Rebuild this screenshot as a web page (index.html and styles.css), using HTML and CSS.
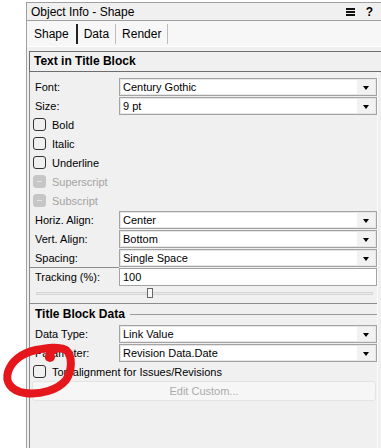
FILE: index.html
```html
<!DOCTYPE html>
<html lang="en">
<head>
  <meta charset="UTF-8">
  <title>Object Info - Shape</title>
  <link rel="stylesheet" href="styles.css">
</head>
<body>
  <div class="app">
    <div class="gutter"></div>
    <div class="panel">
      <div class="titlebar">
        <span class="title">Object Info - Shape</span>
        <span class="menu-icon"><i></i><i></i><i></i></span>
        <span class="help">?</span>
      </div>
      <div class="tabs">
        <span class="tab active">Shape</span>
        <span class="tab">Data</span>
        <span class="tab">Render</span>
      </div>
      <div class="section">
        <div class="section-head">Text in Title Block</div>
        <div class="section-body">
          <div class="row"><label>Font:</label><div class="select">Century Gothic<span class="arrow"></span></div></div>
          <div class="row"><label>Size:</label><div class="select">9 pt<span class="arrow"></span></div></div>
          <div class="check-row"><span class="box"></span>Bold</div>
          <div class="check-row"><span class="box"></span>Italic</div>
          <div class="check-row"><span class="box"></span>Underline</div>
          <div class="check-row disabled"><span class="box"></span>Superscript</div>
          <div class="check-row disabled"><span class="box"></span>Subscript</div>
          <div class="row"><label>Horiz. Align:</label><div class="select">Center<span class="arrow"></span></div></div>
          <div class="row"><label>Vert. Align:</label><div class="select">Bottom<span class="arrow"></span></div></div>
          <div class="row"><label>Spacing:</label><div class="select">Single Space<span class="arrow"></span></div></div>
          <div class="row tracking"><label>Tracking (%):</label><div class="select input">100</div></div>
          <div class="slider"><div class="track"></div><span class="thumb" style="left: 117px"></span></div>
          <div class="group-title">Title Block Data</div>
          <div class="row"><label>Data Type:</label><div class="select">Link Value<span class="arrow"></span></div></div>
          <div class="row"><label>Parameter:</label><div class="select">Revision Data.Date<span class="arrow"></span></div></div>
          <div class="check-row"><span class="box"></span>Top alignment for Issues/Revisions</div>
          <div class="button disabled">Edit Custom...</div>
        </div>
      </div>
    </div>
  </div>
  <svg class="markup" width="381" height="448" viewBox="0 0 381 448">
    <path d="M49 357 C50 350 58 346 66 350 C73 356 72 371 66 380 C58 390 40 395 25 393 C11 391 5 382 8 372 C11 362 21 353 36 350 C47 348 58 346 66 350" />
    <circle cx="50" cy="357" r="5" />
  </svg>
</body>
</html>
```

FILE: styles.css
```css
body { margin: 0; background: #fff; font-family: 'Liberation Sans', Arial, sans-serif; font-size: 11px; color: #000; position: relative; }
.app { display: flex; height: 448px; }
.gutter { width: 26px; flex: none; }
.panel { flex: 1; margin-top: 2px; border-left: 1px solid #a0a0a0; background: #f0f0f0; display: flex; flex-direction: column; }

.titlebar { height: 17px; border-top: 1px solid #a0a0a0; border-bottom: 1px solid #a0a0a0; display: flex; align-items: center; padding-left: 4px; font-size: 12px; }
.titlebar .title { flex: 1; }
.menu-icon { display: flex; flex-direction: column; gap: 1px; width: 9px; margin-right: 11px; }
.menu-icon i { display: block; height: 2px; background: #111; }
.help { font-weight: bold; font-size: 12px; margin-right: 8px; }

.tabs { height: 25px; background: #f7f7f7; border-bottom: 1px solid #fff; display: flex; align-items: center; font-size: 12px; padding-left: 7px; }
.tab { padding: 0 6px 0 0; margin-right: 6px; height: 20px; line-height: 20px; border-right: 1px solid #bcbcbc; }
.tab.active { border-right: 2px solid #222; margin-right: 6px; padding-right: 7px; }

.section { flex: 1; margin: 4px 0 0 2px; display: flex; flex-direction: column; }
.section-head { height: 19px; line-height: 19px; border-top: 1px solid #6e6e6e; border-bottom: 1px solid #6e6e6e; border-left: 1px solid #6e6e6e; font-weight: bold; font-size: 12px; padding-left: 4px; }
.section-body { flex: 1; border-left: 1px solid #8c8c8c; border-right: 1px solid #fbfbfb; margin-right: 3px; padding-top: 5px; }

.row { display: grid; grid-template-columns: 89px 1fr; height: 19px; align-items: center; }
.row label { padding-left: 5px; }
.select { height: 16px; line-height: 16px; margin-top: 1px; border: 1px solid #a3a3a3; box-shadow: inset 0 0 0 1px #e6e6e6; background: #fff; padding-left: 3px; display: flex; position: relative; }
.select .arrow { position: absolute; right: 1px; top: 1px; bottom: 1px; width: 18px; background: #f2f2f2; }
.select .arrow::after { content: ''; position: absolute; left: 6px; top: 6px; border-left: 3px solid transparent; border-right: 3px solid transparent; border-top: 4px solid #000; }
.select.input { box-shadow: none; }
.tracking label { border-top: 1px solid #8c8c8c; height: 18px; line-height: 18px; }

.check-row { height: 19px; display: flex; align-items: center; padding-left: 3px; }
.box { width: 11px; height: 11px; border: 1px solid #333; border-radius: 3px; margin-right: 6px; }
.check-row.disabled { color: #a3a3a3; }
.check-row.disabled .box { border-color: #c6c6c6; background: #c6c6c6; position: relative; }
.check-row.disabled .box::after { content: ''; position: absolute; left: 3px; right: 3px; top: 5px; height: 1px; background: #e4e4e4; }

.slider { position: relative; height: 17px; border-bottom: 1px solid #8c8c8c; }
.slider .track { position: absolute; left: 6px; right: 4px; top: 6px; height: 1px; border: 1px solid #d6d6d6; background: #e7eaea; }
.slider .thumb { position: absolute; top: 2px; width: 4px; height: 8px; border: 1px solid #666; background: #f7f7f7; }

.group-title { height: 20px; display: flex; align-items: center; font-weight: bold; font-size: 12px; padding-left: 5px; }
.group-title::after { content: ''; flex: 1; height: 1px; background: #9a9a9a; margin-left: 5px; }

.button { margin: 0 1px 0 2px; height: 18px; line-height: 18px; border: 1px solid #e4e4e4; border-radius: 3px; background: #f6f6f6; text-align: center; }
.button.disabled { color: #ababab; }

.markup { position: absolute; left: 0; top: 0; pointer-events: none; }
.markup path { fill: none; stroke: #e6171c; stroke-width: 8; stroke-linecap: round; stroke-linejoin: round; }
.markup circle { fill: #e6171c; }
```
